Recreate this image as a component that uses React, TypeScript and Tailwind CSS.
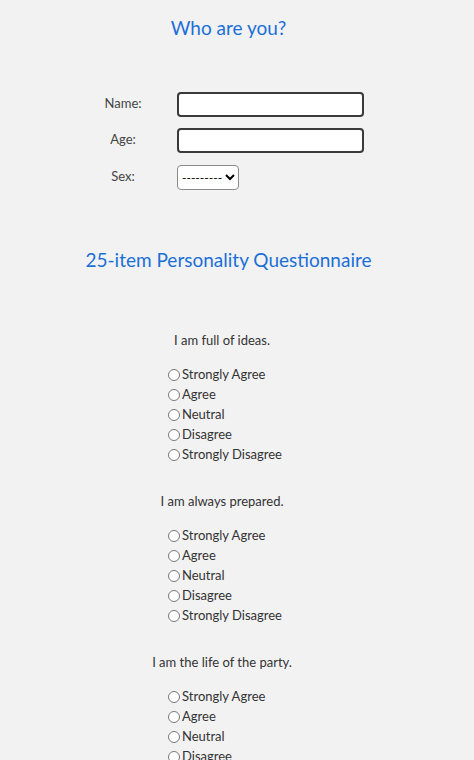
import React from "react";

const options = ["Strongly Agree", "Agree", "Neutral", "Disagree", "Strongly Disagree"];
const questions = ["I am full of ideas.", "I am always prepared.", "I am the life of the party."];

function Question({ text, idx }: { text: string; idx: number }) {
  return (
    <div className="flex flex-col">
      <p className="w-[444px] text-center text-[13px] leading-[16px] text-[#333]">{text}</p>
      <div className="mt-[17px] pl-[168px] flex flex-col">
        {options.map((o) => (
          <label key={o} className="flex items-center h-[20px] text-[13px] text-[#333]">
            <input type="radio" name={`q${idx}`} className="m-0 w-[12px] h-[12px] mr-[2px]" />
            <span>{o}</span>
          </label>
        ))}
      </div>
    </div>
  );
}

export default function App() {
  return (
    <div className="min-h-[760px] bg-[#f2f2f2] font-['Lato',sans-serif] text-[#333] overflow-hidden">
      <div className="w-[457px]">
        <h1 className="pt-[15px] text-center text-[19px] leading-[26px] text-[#1b6fd8]">Who are you?</h1>
        <div className="mt-[51px] flex flex-col gap-[12px] pl-[95px]">
          <div className="flex items-center h-[24px]">
            <span className="w-[56px] text-center text-[13px] text-[#444]">Name:</span>
            <input className="ml-[26px] w-[187px] h-[25px] bg-white border-2 border-[#3a3a3a] rounded-[4px]" />
          </div>
          <div className="flex items-center h-[24px]">
            <span className="w-[56px] text-center text-[13px] text-[#444]">Age:</span>
            <input className="ml-[26px] w-[187px] h-[25px] bg-white border-2 border-[#3a3a3a] rounded-[4px]" />
          </div>
          <div className="flex items-center h-[24px] mt-[1px]">
            <span className="w-[56px] text-center text-[13px] text-[#444]">Sex:</span>
            <select className="ml-[26px] w-[62px] h-[25px] bg-white border border-[#8a8a8a] rounded-[4px] text-[12px] text-black">
              <option>---------</option>
            </select>
          </div>
        </div>
        <h2 className="mt-[58px] text-center text-[19px] leading-[26px] text-[#1b6fd8]">25-item Personality Questionnaire</h2>
        <div className="mt-[59px] flex flex-col gap-[28px]">
          {questions.map((q, i) => (
            <Question key={q} text={q} idx={i} />
          ))}
        </div>
      </div>
    </div>
  );
}
